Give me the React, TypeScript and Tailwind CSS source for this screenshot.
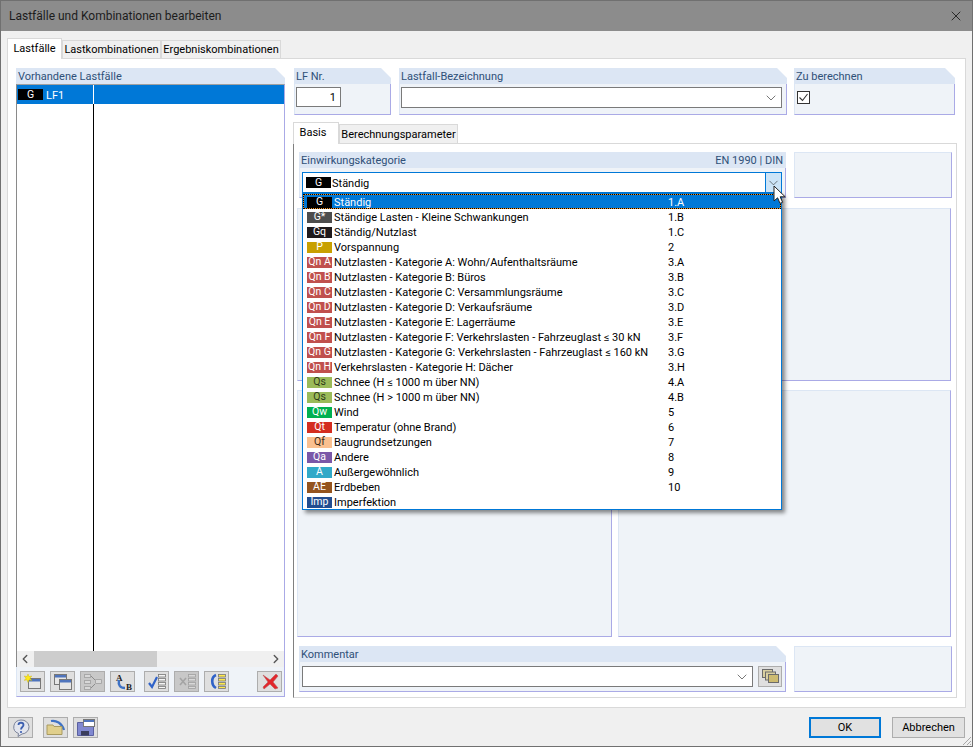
import type { ReactNode } from "react";
import { ChevronDown, ChevronLeft, ChevronRight, X } from "lucide-react";

const categories = [
  { tag: "G", label: "Ständig", code: "1.A", badge: "bg-[#000000] text-white" },
  { tag: "G*", label: "Ständige Lasten - Kleine Schwankungen", code: "1.B", badge: "bg-[#4d4d4d] text-white" },
  { tag: "Gq", label: "Ständig/Nutzlast", code: "1.C", badge: "bg-[#1f1a1c] text-white" },
  { tag: "P", label: "Vorspannung", code: "2", badge: "bg-[#c8a000] text-white" },
  { tag: "Qn A", label: "Nutzlasten - Kategorie A: Wohn/Aufenthaltsräume", code: "3.A", badge: "bg-[#c0504d] text-white" },
  { tag: "Qn B", label: "Nutzlasten - Kategorie B: Büros", code: "3.B", badge: "bg-[#c0504d] text-white" },
  { tag: "Qn C", label: "Nutzlasten - Kategorie C: Versammlungsräume", code: "3.C", badge: "bg-[#c0504d] text-white" },
  { tag: "Qn D", label: "Nutzlasten - Kategorie D: Verkaufsräume", code: "3.D", badge: "bg-[#c0504d] text-white" },
  { tag: "Qn E", label: "Nutzlasten - Kategorie E: Lagerräume", code: "3.E", badge: "bg-[#c0504d] text-white" },
  { tag: "Qn F", label: "Nutzlasten - Kategorie F: Verkehrslasten - Fahrzeuglast ≤ 30 kN", code: "3.F", badge: "bg-[#c0504d] text-white" },
  { tag: "Qn G", label: "Nutzlasten - Kategorie G: Verkehrslasten - Fahrzeuglast ≤ 160 kN", code: "3.G", badge: "bg-[#c0504d] text-white" },
  { tag: "Qn H", label: "Verkehrslasten - Kategorie H: Dächer", code: "3.H", badge: "bg-[#c0504d] text-white" },
  { tag: "Qs", label: "Schnee (H ≤ 1000 m über NN)", code: "4.A", badge: "bg-[#9bbb59] text-[#2f3a1a]" },
  { tag: "Qs", label: "Schnee (H > 1000 m über NN)", code: "4.B", badge: "bg-[#9bbb59] text-[#2f3a1a]" },
  { tag: "Qw", label: "Wind", code: "5", badge: "bg-[#00b050] text-white" },
  { tag: "Qt", label: "Temperatur (ohne Brand)", code: "6", badge: "bg-[#d42d20] text-white" },
  { tag: "Qf", label: "Baugrundsetzungen", code: "7", badge: "bg-[#fac090] text-[#3a2a1a]" },
  { tag: "Qa", label: "Andere", code: "8", badge: "bg-[#7a57a8] text-white" },
  { tag: "A", label: "Außergewöhnlich", code: "9", badge: "bg-[#31a9c8] text-white" },
  { tag: "AE", label: "Erdbeben", code: "10", badge: "bg-[#94541e] text-white" },
  { tag: "Imp", label: "Imperfektion", code: "", badge: "bg-[#224d90] text-white" },
];

function Badge({ tag, className }: { tag: string; className: string }) {
  return (
    <span className={`flex h-[11px] w-[25px] shrink-0 items-center justify-center whitespace-nowrap pt-[1px] text-[10.5px] leading-none ${className}`}>
      {tag}
    </span>
  );
}

function Group({
  title,
  right,
  square,
  className,
  bodyClassName,
  children,
}: {
  title: string;
  right?: string;
  square?: boolean;
  className: string;
  bodyClassName?: string;
  children: ReactNode;
}) {
  return (
    <div className={`flex flex-col ${className}`}>
      <div
        className={`flex h-[16px] shrink-0 items-center justify-between bg-[#dce6f4] pl-[2px] pr-[3px] text-[#2f5078] ${
          square ? "" : "[clip-path:polygon(0_0,calc(100%-10px)_0,100%_10px,100%_100%,0_100%)]"
        }`}
      >
        <span>{title}</span>
        {right && <span>{right}</span>}
      </div>
      <div className={`relative flex-1 border-b border-l border-r border-b-[#aaaae6] border-l-[#dce6f4] border-r-[#aaaae6] bg-[#eff3f8] ${bodyClassName ?? ""}`}>
        {children}
      </div>
    </div>
  );
}

function EmptyBox({ className }: { className: string }) {
  return <div className={`border border-b-[#aaaae6] border-l-[#dce6f4] border-r-[#aaaae6] border-t-[#dce6f4] bg-[#eff3f8] ${className}`} />;
}

function ToolButton({ disabled, className, children }: { disabled?: boolean; className?: string; children: ReactNode }) {
  return (
    <div className={`flex h-[21px] w-[25px] items-center justify-center border border-[#adadad] ${disabled ? "bg-[#c8c8c8]" : "bg-[#dfdfdf]"} ${className ?? ""}`}>
      {children}
    </div>
  );
}

function MiniWindow({ x, y, w, h }: { x: number; y: number; w: number; h: number }) {
  return (
    <>
      <rect x={x} y={y} width={w} height={h} fill="#e6e6e6" stroke="#777" strokeWidth="1" />
      <rect x={x + 0.5} y={y + 0.5} width={w - 1} height="2.5" fill="#4f74bc" />
    </>
  );
}

function ListLines({ color, stroke }: { color: string; stroke: string }) {
  return (
    <g fill={color} stroke={stroke} strokeWidth="0.8">
      <rect x="10.5" y="1.5" width="7" height="2.5" />
      <rect x="10.5" y="5.5" width="7" height="2.5" />
      <rect x="10.5" y="9.5" width="7" height="2.5" />
      <rect x="10.5" y="13.5" width="7" height="2" />
    </g>
  );
}

const Toolbar = () => (
  <div className="flex h-[30px] items-center border-b border-l border-r border-b-[#aaaae6] border-l-[#dce6f4] border-r-[#aaaae6] bg-[#eff3f8] pl-[3px]">
    <div className="flex gap-[5px]">
      <ToolButton>
        <svg width="17" height="16" viewBox="0 0 17 16">
          <MiniWindow x={4.5} y={4.5} w={12} h={10} />
          <path d="M4 0l1 2.6 2.8-.6-1.8 2.2 1.8 2.2-2.8-.6-1 2.6-1-2.6-2.8.6 1.8-2.2L.2 2l2.8.6z" fill="#ffe81a" stroke="#c9b000" strokeWidth=".4" />
        </svg>
      </ToolButton>
      <ToolButton>
        <svg width="18" height="16" viewBox="0 0 18 16">
          <MiniWindow x={0.5} y={0.5} w={12} h={10} />
          <MiniWindow x={5.5} y={5.5} w={12} h={10} />
        </svg>
      </ToolButton>
      <ToolButton disabled>
        <svg width="19" height="16" viewBox="0 0 19 16" fill="#d8d8d8" stroke="#a8a8a8">
          <rect x="1.5" y="0.5" width="6" height="3" />
          <rect x="1.5" y="6.5" width="6" height="3" />
          <rect x="1.5" y="12.5" width="6" height="3" />
          <path d="M12.5 5.5h6v4h-6z" />
          <path d="M8 2l4 4M8 14l4-4" stroke="#8c8c8c" />
        </svg>
      </ToolButton>
      <ToolButton>
        <svg width="20" height="18" viewBox="0 0 20 18">
          <path d="M6 7c-1 5 1 8 6 8" fill="none" stroke="#3f72c4" strokeWidth="2.4" />
          <text x="3" y="8" fontSize="9" fontWeight="700" fontFamily="Liberation Serif, serif" fill="#222">A</text>
          <text x="13" y="17" fontSize="9" fontWeight="700" fontFamily="Liberation Serif, serif" fill="#222">B</text>
        </svg>
      </ToolButton>
    </div>
    <div className="ml-[9px] flex gap-[5px]">
      <ToolButton>
        <svg width="18" height="17" viewBox="0 0 18 17">
          <ListLines color="#f4f4f4" stroke="#777" />
          <path d="M1 10l3 4 5-10" fill="none" stroke="#2f62c8" strokeWidth="2.2" />
        </svg>
      </ToolButton>
      <ToolButton disabled>
        <svg width="18" height="17" viewBox="0 0 18 17">
          <ListLines color="#d8d8d8" stroke="#a0a0a0" />
          <path d="M2 5l6 7M8 5l-6 7" fill="none" stroke="#a4a4a4" strokeWidth="1.6" />
        </svg>
      </ToolButton>
      <ToolButton>
        <svg width="18" height="17" viewBox="0 0 18 17">
          <ListLines color="#ffe94a" stroke="#777" />
          <path d="M8 2C3 4 3 12 8 15" fill="none" stroke="#2f62c8" strokeWidth="2.6" />
        </svg>
      </ToolButton>
    </div>
    <ToolButton className="ml-[28px]">
      <svg width="18" height="17" viewBox="0 0 18 17">
        <path d="M2 2l7 5 6-6 2 2-5 6 5 6-3 1-5-5-6 5-1-2 5-5z" fill="#e3262b" stroke="#b8585a" strokeWidth=".6" />
      </svg>
    </ToolButton>
  </div>
);

function Combo({ className }: { className: string }) {
  return (
    <div className={`flex h-[21px] items-center justify-end border border-[#7a7a7a] bg-white pr-[2px] ${className}`}>
      <ChevronDown size={16} strokeWidth={1} color="#333" />
    </div>
  );
}

function TabButton({ active, inner, className, children }: { active?: boolean; inner?: boolean; className: string; children: ReactNode }) {
  const size = active
    ? inner
      ? "relative z-10 -mb-[1px] h-[22px] bg-white pb-[2px]"
      : "relative z-10 -mb-[1px] h-[21px] bg-white pb-[1px]"
    : inner
      ? "h-[19px] bg-[#f0f0f0]"
      : "h-[18px] bg-[#f0f0f0]";
  return (
    <div className={`flex items-center justify-center whitespace-nowrap border-l border-r border-t border-[#d9d9d9] ${size} ${className}`}>
      {children}
    </div>
  );
}

export default function App() {
  return (
    <div className="flex h-[747px] w-[973px] flex-col overflow-hidden border border-[#707070] bg-[#f0f0f0] font-['Roboto',sans-serif] text-[11px] leading-none text-black">
      {/* title bar */}
      <div className="flex h-[30px] shrink-0 items-center justify-between bg-[#8c8c8c] pl-[8px] pr-[8px] text-[12px] text-[#1c1c1c]">
        <span>Lastfälle und Kombinationen bearbeiten</span>
        <X size={16} strokeWidth={1.2} color="#111" />
      </div>

      {/* tabs */}
      <div className="flex h-[27px] shrink-0 items-end pl-[6px]">
        <TabButton active className="w-[55px]">Lastfälle</TabButton>
        <TabButton className="w-[99px]">Lastkombinationen</TabButton>
        <TabButton className="w-[120px]">Ergebniskombinationen</TabButton>
      </div>

      <div className="mx-[6px] flex h-[650px] shrink-0 gap-[8px] border border-[#d9d9d9] bg-white pl-[8px] pt-[9px]">
        {/* left column */}
        <div className="flex h-[629px] w-[269px] shrink-0 flex-col">
          <div className="flex h-[16px] shrink-0 items-center bg-[#dce6f4] pl-[2px] text-[#2f5078] [clip-path:polygon(0_0,calc(100%-10px)_0,100%_10px,100%_100%,0_100%)]">
            Vorhandene Lastfälle
          </div>
          <div className="flex min-h-0 flex-1 flex-col border-l border-r border-t border-l-[#8a8a8a] border-r-[#aaaae6] border-t-[#a0a0a0]">
            <div className="flex h-[19px] shrink-0 bg-[#0078d7] text-white">
              <div className="flex w-[77px] items-center gap-[3px] border-r border-white pl-[1px]">
                <Badge tag="G" className="bg-black text-white" />
                <span className="pt-[2px]">LF1</span>
              </div>
            </div>
            <div className="flex-1">
              <div className="h-full w-[77px] border-r border-black" />
            </div>
            <div className="flex h-[16px] shrink-0 items-center justify-between bg-[#f0f0f0] px-[1px]">
              <ChevronLeft size={14} strokeWidth={2.4} color="#555" />
              <div className="mr-auto ml-[2px] h-full w-[123px] bg-[#cdcdcd]" />
              <ChevronRight size={14} strokeWidth={2.4} color="#555" />
            </div>
          </div>
          <Toolbar />
        </div>

        {/* right column */}
        <div className="flex w-[664px] shrink-0 flex-col">
          <div className="ml-[1px] flex h-[47px] shrink-0 gap-[8px]">
            <Group title="LF Nr." className="w-[97px]" bodyClassName="pl-[1px] pt-[3px]">
              <div className="flex h-[20px] w-[45px] items-center justify-end border border-[#7a7a7a] bg-white pr-[4px]">1</div>
            </Group>
            <Group title="Lastfall-Bezeichnung" className="w-[388px]" bodyClassName="pl-[1px] pt-[3px]">
              <Combo className="w-[381px]" />
            </Group>
            <Group title="Zu berechnen" className="-ml-[1px] w-[161px]" bodyClassName="pl-[2px] pt-[7px]">
              <div className="flex h-[13px] w-[13px] items-center justify-center border border-[#333] bg-white">
                <svg width="11" height="11" viewBox="0 0 11 11">
                  <path d="M1.5 5.5l3 3 5-6.5" fill="none" stroke="#333" strokeWidth="1.1" />
                </svg>
              </div>
            </Group>
          </div>

          <div className="mt-[7px] flex h-[21px] shrink-0 items-end">
            <TabButton active inner className="w-[46px] pr-[6px]">Basis</TabButton>
            <TabButton inner className="w-[119px]">Berechnungsparameter</TabButton>
          </div>

          {/* inner panel */}
          <div className="flex h-[555px] shrink-0 flex-col border border-[#d9d9d9] border-l-[#808080] pl-[3px] pt-[8px]">
            <div className="flex h-[46px] shrink-0">
              <Group title="Einwirkungskategorie" right="EN 1990 | DIN" square className="relative z-20 ml-[2px] w-[487px]">
                {/* open dropdown */}
                <div className="relative ml-[2px] mt-[4px] w-[480px]">
                  <div className="flex h-[21px] items-center border border-[#0078d7] bg-white pl-[3px]">
                    <Badge tag="G" className="bg-black text-white" />
                    <span className="ml-[1px] pt-[2px]">Ständig</span>
                    <div className="absolute right-0 top-0 flex h-[21px] w-[17px] items-center justify-center border border-[#0078d7] bg-[#cce4f7]">
                      <ChevronDown size={16} strokeWidth={1} color="#333" />
                    </div>
                  </div>
                  <div className="absolute left-0 top-[21px] w-[480px] border border-[#0078d7] bg-white shadow-[3px_3px_4px_rgba(0,0,0,0.45)]">
                    {categories.map((item, index) =>
                      index === 0 ? (
                        <div key={index} className="h-[15px] border border-dotted border-black bg-[#f09020]">
                          <div className="flex h-[13px] items-center bg-[#0078d7] pl-[3px] pt-[1px] text-white">
                            <Badge tag={item.tag} className={item.badge} />
                            <span className="ml-[2px] w-[334px]">{item.label}</span>
                            <span>{item.code}</span>
                          </div>
                        </div>
                      ) : (
                        <div key={index} className="flex h-[15px] items-center pl-[4px] pt-[1px]">
                          <Badge tag={item.tag} className={item.badge} />
                          <span className="ml-[2px] w-[334px] whitespace-nowrap">{item.label}</span>
                          <span>{item.code}</span>
                        </div>
                      ),
                    )}
                  </div>
                  {/* mouse pointer */}
                  <svg className="absolute left-[471px] top-[13px] z-30" width="14" height="20" viewBox="0 0 14 20">
                    <path d="M1 1v15l3.6-3.2 2.4 5.6 2.6-1.1-2.4-5.5h5z" fill="#fff" stroke="#222" strokeWidth="1" />
                  </svg>
                </div>
              </Group>
              <EmptyBox className="ml-[8px] w-[158px]" />
            </div>

            <div className="mt-[10px] flex h-[173px] shrink-0 gap-[6px]">
              <EmptyBox className="w-[315px]" />
              <EmptyBox className="w-[333px]" />
            </div>
            <div className="mt-[9px] flex h-[247px] shrink-0 gap-[6px]">
              <EmptyBox className="w-[315px]" />
              <EmptyBox className="w-[333px]" />
            </div>

            <div className="mt-[9px] flex h-[46px] shrink-0">
              <Group title="Kommentar" className="ml-[2px] w-[487px]" bodyClassName="flex gap-[5px] pl-[2px] pt-[4px]">
                <Combo className="w-[451px]" />
                <div className="flex h-[21px] w-[24px] items-center justify-center border border-[#adadad] bg-[#dfdfdf]">
                  <svg width="17" height="15" viewBox="0 0 17 15" fill="#d8cfa0" stroke="#6b6b6b">
                    <rect x="0.5" y="0.5" width="10" height="8" />
                    <rect x="3.5" y="3" width="10" height="8" />
                    <rect x="6.5" y="5.5" width="10" height="8" fill="#cdbb70" />
                  </svg>
                </div>
              </Group>
              <EmptyBox className="ml-[8px] w-[158px]" />
            </div>
          </div>
        </div>
      </div>

      {/* footer */}
      <div className="relative flex flex-1 items-start pl-[7px] pt-[9px]">
        <ToolButton>
          <svg width="20" height="18" viewBox="0 0 20 18">
            <path d="M10 1a7.500 7 0 0 1 1 14l-4 2.500 .5-3A7.500 7 0 0 1 10 1z" fill="#e2e5ee" stroke="#7a8298" />
            <path d="M7.500 6c0-3 5-3 5 0 0 2-2.500 2-2.500 4.500" fill="none" stroke="#3c5fb0" strokeWidth="1.8" />
            <circle cx="10" cy="13" r="1.100" fill="#3c5fb0" />
          </svg>
        </ToolButton>
        <ToolButton className="ml-[10px]">
          <svg width="20" height="17" viewBox="0 0 20 17">
            <path d="M5 2c5-1 11 2 13 9" fill="none" stroke="#3f72c4" strokeWidth="2.2" />
            <path d="M1 6h6l1 1.500h8v8H1z" fill="#e0cf8c" stroke="#a89a60" />
          </svg>
        </ToolButton>
        <ToolButton className="ml-[5px]">
          <svg width="20" height="18" viewBox="0 0 20 18">
            <path d="M1.500 3.500h13l3 3v10h-16z" fill="#8088d0" stroke="#5a60a0" />
            <rect x="7.500" y="0.500" width="11" height="7" fill="#fff" stroke="#777" />
            <rect x="8" y="1" width="10" height="2" fill="#4f74bc" />
            <rect x="5" y="12" width="8" height="4.500" fill="#3a3d5c" />
          </svg>
        </ToolButton>

        <div className="ml-auto mr-[7px] flex gap-[11px]">
          <div className="flex h-[21px] w-[72px] items-center justify-center border-2 border-[#0078d7] bg-[#e1e1e1]">OK</div>
          <div className="flex h-[21px] w-[73px] items-center justify-center border border-[#adadad] bg-[#e1e1e1]">Abbrechen</div>
        </div>
        {/* resize grip */}
        <svg className="absolute bottom-0 right-0" width="12" height="12" viewBox="0 0 12 12">
          <path d="M11 3L3 11M11 7l-4 4M11 10l-1 1" stroke="#a8a8a8" strokeWidth="1" />
        </svg>
      </div>
    </div>
  );
}
